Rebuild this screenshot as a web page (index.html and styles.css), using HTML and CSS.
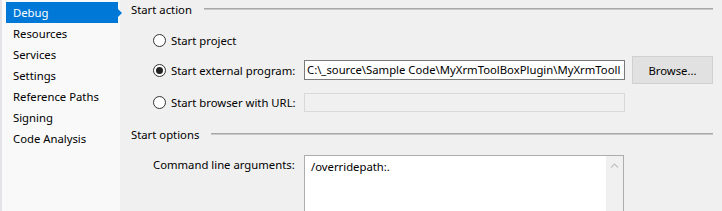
FILE: index.html
```html
<!DOCTYPE html>
<html>
<head>
<meta charset="utf-8">
<link rel="stylesheet" href="styles.css">
</head>
<body>
<div class="window">
  <div class="edge"></div>
  <nav class="sidebar">
    <div class="nav-item active">Debug<span class="arrow"></span></div>
    <div class="nav-item">Resources</div>
    <div class="nav-item">Services</div>
    <div class="nav-item">Settings</div>
    <div class="nav-item">Reference Paths</div>
    <div class="nav-item">Signing</div>
    <div class="nav-item">Code Analysis</div>
  </nav>
  <main class="content">
    <div class="group-header"><span>Start action</span><div class="rule"></div></div>
    <div class="row row-project">
      <label class="radio-label"><span class="radio"></span>Start project</label>
    </div>
    <div class="row row-external">
      <label class="radio-label"><span class="radio checked"></span>Start external program:</label>
      <div class="textbox"><span class="textbox-value">C:\_source\Sample Code\MyXrmToolBoxPlugin\MyXrmTooll</span></div>
      <button class="button">Browse...</button>
    </div>
    <div class="row row-browser">
      <label class="radio-label"><span class="radio"></span>Start browser with URL:</label>
      <div class="textbox disabled"></div>
    </div>
    <div class="group-header options"><span>Start options</span><div class="rule"></div></div>
    <div class="row row-args">
      <label class="plain-label">Command line arguments:</label>
      <div class="textarea">
        <div class="textarea-text">/overridepath:.</div>
        <div class="scrollbar"><svg width="9" height="6" viewBox="0 0 9 6"><path d="M1 4.5 L4.5 1 L8 4.5" fill="none" stroke="#c2c2c2" stroke-width="1.2"/></svg></div>
      </div>
    </div>
  </main>
</div>
</body>
</html>
```

FILE: styles.css
```css
* { box-sizing: border-box; }
html, body { margin: 0; padding: 0; }
body {
  width: 722px;
  height: 211px;
  overflow: hidden;
  background: #f0f0f0;
  font-family: "Noto Sans", "Open Sans", sans-serif;
  font-size: 11.3px;
  color: #000;
}
.window {
  display: flex;
  height: 211px;
  overflow: hidden;
}
.edge {
  width: 2px;
  background: #e4e4e8;
  flex: none;
}
.sidebar {
  width: 118px;
  flex: none;
  background: #f9f9f9;
  padding-top: 2px;
}
.nav-item {
  position: relative;
  height: 21px;
  line-height: 22px;
  margin-left: 4px;
  width: 112px;
  padding-left: 7px;
  white-space: nowrap;
}
.nav-item.active {
  background: #0078d7;
  color: #fff;
}
.arrow {
  position: absolute;
  right: -4px;
  top: 7px;
  width: 0;
  height: 0;
  border-top: 4px solid transparent;
  border-bottom: 4px solid transparent;
  border-left: 4px solid #0078d7;
}
.content {
  flex: 1;
  padding-left: 11px;
  padding-right: 9px;
}
.group-header {
  display: flex;
  align-items: center;
  height: 18px;
  gap: 12px;
}
.group-header .rule {
  flex: 1;
  height: 2px;
  margin-top: -1px;
  border-top: 1px solid #a8a8a8;
  border-bottom: 1px solid #c9c9c9;
}
.group-header.options {
  margin-top: 10px;
}
.row {
  display: flex;
  align-items: center;
  padding-left: 22px;
}
.row-project { height: 28px; margin-top: 8px; }
.row-external { height: 28px; margin-top: 2px; }
.row-browser { height: 26px; margin-top: 5px; }
.row-args { align-items: flex-start; margin-top: 12px; }
.radio-label, .plain-label {
  width: 151px;
  flex: none;
  display: flex;
  align-items: center;
  white-space: nowrap;
}
.plain-label { height: 20px; margin-top: -1px; }
.radio {
  width: 13px;
  height: 13px;
  border: 1px solid #333;
  border-radius: 50%;
  background: #fff;
  margin-right: 5px;
  flex: none;
  display: flex;
  align-items: center;
  justify-content: center;
}
.radio.checked::after {
  content: "";
  width: 7px;
  height: 7px;
  border-radius: 50%;
  background: #222;
}
.textbox {
  width: 321px;
  height: 20px;
  flex: none;
  background: #fff;
  border: 1px solid #7a7a7a;
  padding-left: 2px;
  line-height: 18px;
  white-space: nowrap;
  overflow: hidden;
}
.textbox.disabled {
  background: #f0f0f0;
  border-color: #d9d9d9;
  height: 19px;
}
.button {
  margin-left: 7px;
  width: 81px;
  height: 28px;
  flex: none;
  background: #e1e1e1;
  border: 1px solid #d0d0d0;
  font: inherit;
  color: #000;
  padding: 0;
}
.textarea {
  width: 320px;
  height: 56px;
  flex: none;
  display: flex;
  background: #fff;
  border: 1px solid #adadad;
  border-bottom: none;
}
.textarea-text {
  flex: 1;
  padding: 2px 0 0 6px;
  line-height: 18px;
}
.scrollbar {
  width: 17px;
  background: #f0f0f0;
  display: flex;
  justify-content: center;
  padding-top: 7px;
}
.scrollbar svg { display: block; }
```
